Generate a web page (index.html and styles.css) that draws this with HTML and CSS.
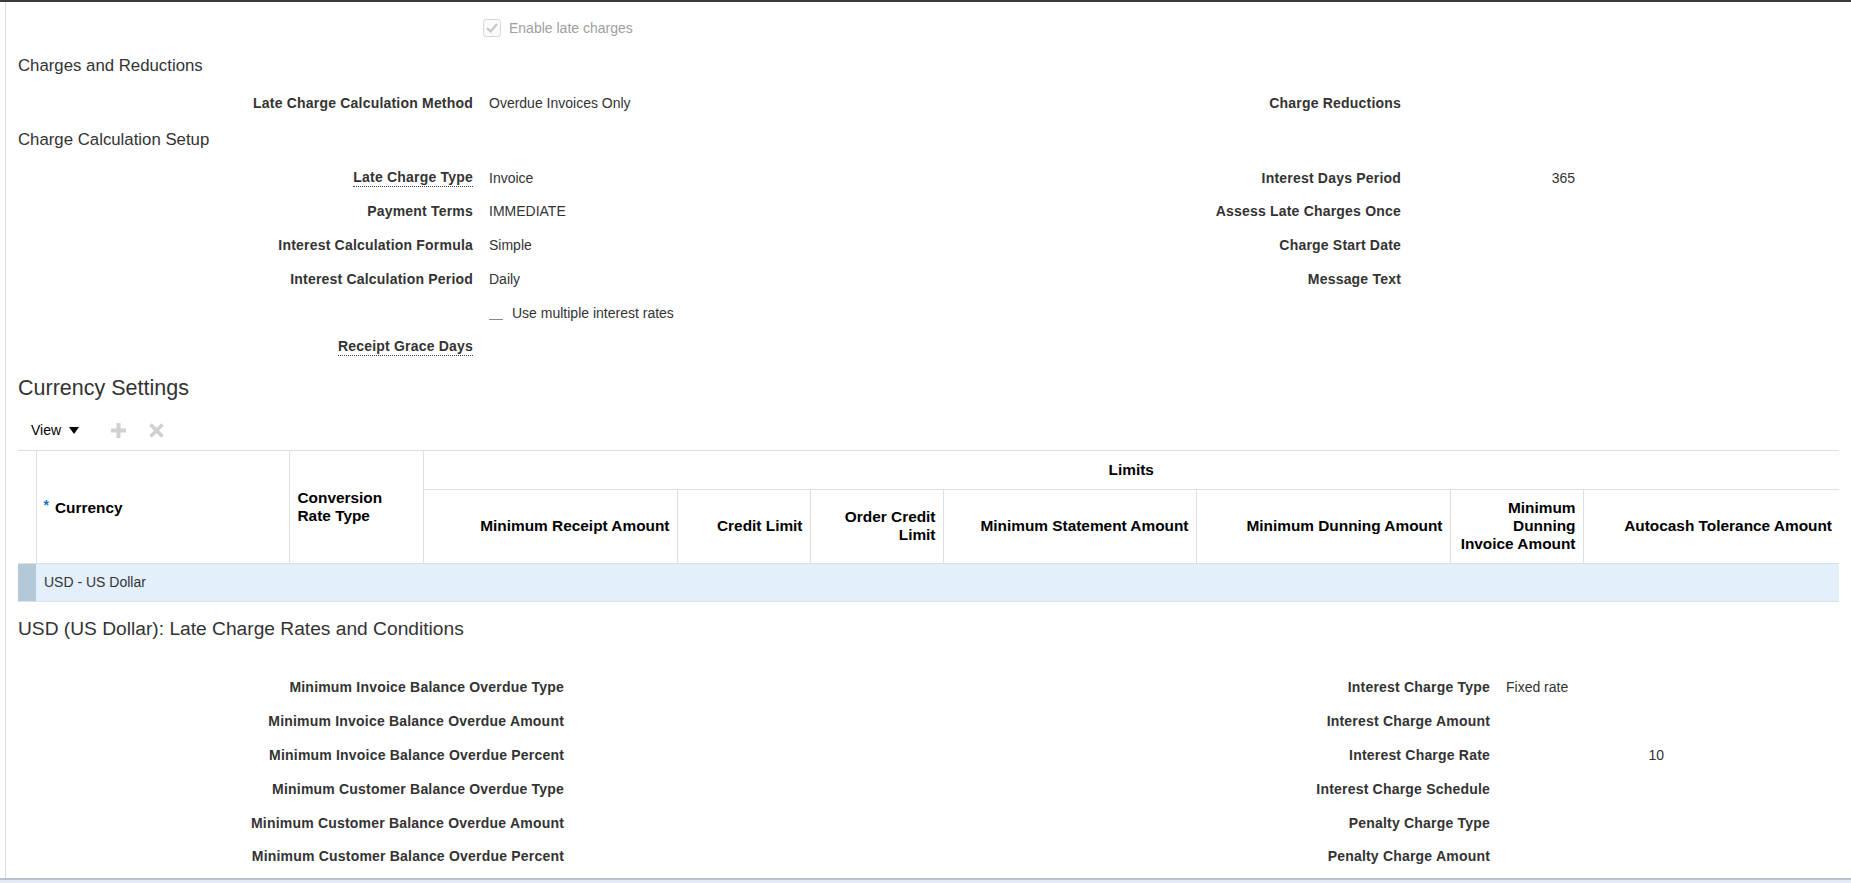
FILE: index.html
```html
<!DOCTYPE html>
<html>
<head>
<meta charset="UTF-8">
<title>Late Charges</title>
<link rel="stylesheet" href="styles.css">
</head>
<body>
<div class="shell">
  <div class="panel">
    <div class="enable-row">
      <span class="check"><svg width="12" height="10" viewBox="0 0 12 10"><path d="M1 5l3.5 3.5L11 1" stroke="#c4c4c4" stroke-width="2" fill="none"/></svg></span>
      <span class="muted">Enable late charges</span>
    </div>

    <h2 class="sub">Charges and Reductions</h2>
    <div class="form form-a first">
      <span class="lbl">Late Charge Calculation Method</span><span class="val">Overdue Invoices Only</span>
      <span class="lbl">Charge Reductions</span><span class="val"></span>
    </div>

    <h2 class="sub">Charge Calculation Setup</h2>
    <div class="form form-a">
      <span class="lbl"><span class="help">Late Charge Type</span></span><span class="val">Invoice</span>
      <span class="lbl">Interest Days Period</span><span class="val"><span class="num">365</span></span>
      <span class="lbl">Payment Terms</span><span class="val">IMMEDIATE</span>
      <span class="lbl">Assess Late Charges Once</span><span class="val"></span>
      <span class="lbl">Interest Calculation Formula</span><span class="val">Simple</span>
      <span class="lbl">Charge Start Date</span><span class="val"></span>
      <span class="lbl">Interest Calculation Period</span><span class="val">Daily</span>
      <span class="lbl">Message Text</span><span class="val"></span>
      <span class="lbl"></span><span class="val"><span class="dash"></span>Use multiple interest rates</span>
      <span class="lbl"></span><span class="val"></span>
      <span class="lbl"><span class="help">Receipt Grace Days</span></span><span class="val"></span>
      <span class="lbl"></span><span class="val"></span>
    </div>

    <h2 class="section">Currency Settings</h2>
    <div class="toolbar">
      <span class="view">View</span>
      <svg class="caret" width="10" height="7" viewBox="0 0 10 7"><path d="M0 0h10L5 7z" fill="#000"/></svg>
      <svg class="tool" width="17" height="17" viewBox="0 0 17 17"><path d="M8.5 1v15M1 8.5h15" stroke="#d0d0d0" stroke-width="4"/></svg>
      <svg class="tool" width="17" height="17" viewBox="0 0 17 17"><path d="M2.5 2.5l12 12M14.5 2.5l-12 12" stroke="#d0d0d0" stroke-width="3.6"/></svg>
    </div>

    <table class="grid">
      <colgroup>
        <col style="width:18px"><col style="width:253px"><col style="width:134px">
        <col style="width:254px"><col style="width:133px"><col style="width:133px">
        <col style="width:253px"><col style="width:254px"><col style="width:133px"><col style="width:256px">
      </colgroup>
      <thead>
        <tr class="hr1">
          <th rowspan="2" class="sel"></th>
          <th rowspan="2" class="left cur"><span class="req">*</span>Currency</th>
          <th rowspan="2" class="left">Conversion Rate Type</th>
          <th colspan="7" class="group">Limits</th>
        </tr>
        <tr class="hr2">
          <th>Minimum Receipt Amount</th>
          <th>Credit Limit</th>
          <th>Order Credit Limit</th>
          <th>Minimum Statement Amount</th>
          <th>Minimum Dunning Amount</th>
          <th>Minimum Dunning Invoice Amount</th>
          <th class="last">Autocash Tolerance Amount</th>
        </tr>
      </thead>
      <tbody>
        <tr class="picked">
          <td class="sel"></td>
          <td class="cell">USD - US Dollar</td>
          <td colspan="8"></td>
        </tr>
      </tbody>
    </table>

    <h2 class="section small">USD (US Dollar): Late Charge Rates and Conditions</h2>
    <div class="form form-b">
      <span class="lbl">Minimum Invoice Balance Overdue Type</span><span class="val"></span>
      <span class="lbl">Interest Charge Type</span><span class="val">Fixed rate</span>
      <span class="lbl">Minimum Invoice Balance Overdue Amount</span><span class="val"></span>
      <span class="lbl">Interest Charge Amount</span><span class="val"></span>
      <span class="lbl">Minimum Invoice Balance Overdue Percent</span><span class="val"></span>
      <span class="lbl">Interest Charge Rate</span><span class="val"><span class="num">10</span></span>
      <span class="lbl">Minimum Customer Balance Overdue Type</span><span class="val"></span>
      <span class="lbl">Interest Charge Schedule</span><span class="val"></span>
      <span class="lbl">Minimum Customer Balance Overdue Amount</span><span class="val"></span>
      <span class="lbl">Penalty Charge Type</span><span class="val"></span>
      <span class="lbl">Minimum Customer Balance Overdue Percent</span><span class="val"></span>
      <span class="lbl">Penalty Charge Amount</span><span class="val"></span>
    </div>
  </div>
  <div class="footer"></div>
</div>
</body>
</html>
```

FILE: styles.css
```css
/* Page frame */
html, body {
  margin: 0;
  padding: 0;
  height: 100%;
  overflow: hidden;
  background: #fff;
  font-family: "Liberation Sans", Arial, sans-serif;
  font-size: 14px;
  color: #333;
}
.shell {
  display: flex;
  flex-direction: column;
  height: 100vh;
  border-top: 2px solid #3b3b3b;
  box-sizing: border-box;
}
.panel {
  flex: 1 1 auto;
  margin-left: 5px;
  border-left: 1px solid #d3dce4;
  padding-left: 12px;
  overflow: hidden;
}
.footer {
  flex: 0 0 3px;
  border-top: 2px solid #b9c1c9;
  background: #e3ecf6;
}

/* Enable checkbox */
.enable-row {
  display: flex;
  align-items: center;
  height: 51px;
  padding-left: 465px;
  gap: 8px;
}
.check {
  display: flex;
  align-items: center;
  justify-content: center;
  width: 16px;
  height: 16px;
  border: 1px solid #d6d6d6;
  border-radius: 3px;
  background: #fafafa;
}
.muted { color: #a0a0a0; }

/* Headings */
h2 {
  margin: 0;
  font-weight: normal;
  color: #333;
}
h2.sub {
  font-size: 16.8px;
  line-height: 26px;
}
h2.sub + .form { margin-top: 8px; }
h2.sub + .form.first { margin-top: 7px; }
.form + h2.sub { margin-top: 7px; }
h2.section {
  font-size: 21.5px;
  line-height: 28px;
  margin-top: 10px;
}
h2.section.small {
  font-size: 19.2px;
  margin-top: 13px;
}

/* Label / value forms */
.form {
  display: grid;
  grid-auto-rows: 33.8px;
  align-items: center;
}
.form-a { grid-template-columns: 455px 628px 300px 1fr; }
.form-b {
  grid-template-columns: 546px 626px 300px 1fr;
  margin-top: 28px;
}
.lbl {
  text-align: right;
  font-weight: bold;
  color: #333;
  letter-spacing: 0.2px;
  white-space: nowrap;
}
.val {
  padding-left: 16px;
  white-space: nowrap;
}
.help {
  display: inline-block;
  line-height: 17px;
  border-bottom: 1px dotted #444;
}
.num {
  display: inline-block;
  width: 158px;
  text-align: right;
}
.dash {
  display: inline-block;
  width: 14px;
  height: 1px;
  background: #888;
  vertical-align: -2px;
  margin-right: 9px;
}

/* Toolbar */
.toolbar {
  display: flex;
  align-items: center;
  height: 39px;
  margin-top: 9px;
  padding-left: 13px;
}
.view { color: #000; }
.caret { margin-left: 8px; }
.tool { margin-left: 21px; }
.caret + .tool { margin-left: 31px; }

/* Currency table */
.grid {
  border-collapse: collapse;
  table-layout: fixed;
  width: 1821px;
}
.grid th {
  font-size: 15.4px;
  font-weight: bold;
  color: #000;
  line-height: 18px;
  padding: 0 7px;
  text-align: right;
  vertical-align: middle;
  border-right: 1px solid #d9e0e6;
  border-bottom: 1px solid #d9e0e6;
}
.grid .hr1 th { border-top: 1px solid #d9e0e6; }
.grid .hr1 { height: 39px; }
.grid .hr2 { height: 74px; }
.grid th.left { text-align: left; padding-left: 8px; }
.grid th.cur { padding-left: 7px; }
.grid th.group { text-align: center; border-right: none; }
.grid th.last { border-right: none; }
.grid th.sel { padding: 0; }
.req {
  color: #1f6fbf;
  font-size: 14px;
  vertical-align: 3px;
  margin-right: 6px;
}
.picked { height: 38px; }
.picked td {
  background: #e3f0fc;
  border-bottom: 1px solid #d9e0e6;
  padding: 0;
}
.picked td.sel { background: #b5c8d8; }
.picked td.cell { padding-left: 8px; color: #333; }
```
